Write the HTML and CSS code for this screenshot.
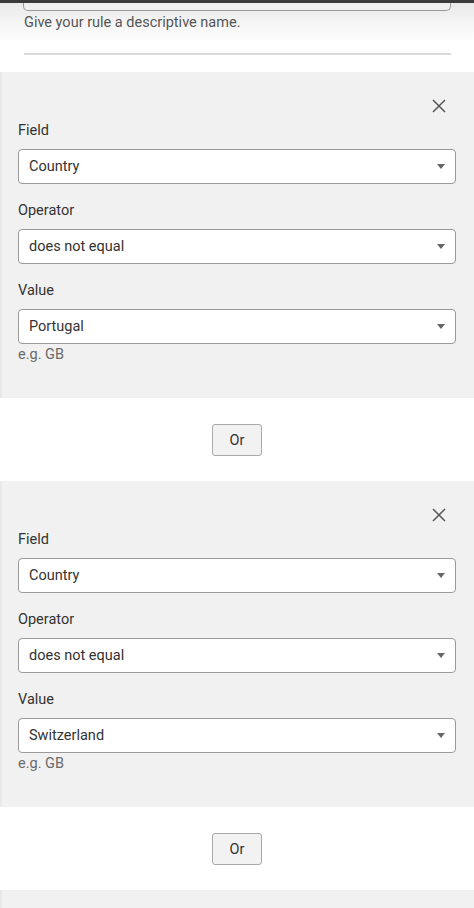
FILE: index.html
```html
<!DOCTYPE html>
<html lang="en">
<head>
<meta charset="utf-8">
<meta name="viewport" content="width=474">
<title>Rule</title>
<link rel="stylesheet" href="styles.css">
</head>
<body>
<div class="topbar"></div>
<section class="name-section">
  <div class="name-input"></div>
  <p class="hint">Give your rule a descriptive name.</p>
  <div class="divider"></div>
</section>

<div class="rule">
  <div class="close-row">
    <svg class="close" width="14" height="14" viewBox="0 0 14 14"><path d="M1 1 L13 13 M13 1 L1 13" stroke="#555" stroke-width="1.5" fill="none"/></svg>
  </div>
  <div class="label">Field</div>
  <div class="select"><span>Country</span><i class="caret"></i></div>
  <div class="label">Operator</div>
  <div class="select"><span>does not equal</span><i class="caret"></i></div>
  <div class="label">Value</div>
  <div class="select"><span>Portugal</span><i class="caret"></i></div>
  <div class="help">e.g. GB</div>
</div>
<div class="or-row"><button class="or">Or</button></div>

<div class="rule">
  <div class="close-row">
    <svg class="close" width="14" height="14" viewBox="0 0 14 14"><path d="M1 1 L13 13 M13 1 L1 13" stroke="#555" stroke-width="1.5" fill="none"/></svg>
  </div>
  <div class="label">Field</div>
  <div class="select"><span>Country</span><i class="caret"></i></div>
  <div class="label">Operator</div>
  <div class="select"><span>does not equal</span><i class="caret"></i></div>
  <div class="label">Value</div>
  <div class="select"><span>Switzerland</span><i class="caret"></i></div>
  <div class="help">e.g. GB</div>
</div>
<div class="or-row"><button class="or">Or</button></div>

<div class="rule"></div>
</body>
</html>
```

FILE: styles.css
```css
html, body {
  margin: 0;
  padding: 0;
  background: #fff;
  font-family: Roboto, "Noto Sans", sans-serif;
  color: #333;
}
.topbar {
  height: 3px;
  background: #3a3a3a;
}
.name-section {
  background: linear-gradient(#e9e9e9 0px, #f6f6f6 22px, #ffffff 40px);
  padding: 0 0 17px;
}
.name-input {
  height: 7px;
  margin: 0 23px 0 23px;
  border: 1px solid #9a9a9a;
  border-top: none;
  border-radius: 0 0 5px 5px;
  background: #efefef;
}
.hint {
  margin: 3px 0 0 24px;
  font-size: 14.5px;
  line-height: 18px;
  color: #555;
}
.divider {
  margin: 21px 23px 0 24px;
  height: 2px;
  background: #dadada;
}
.rule {
  background: #f1f1f1;
  border-left: 2px solid #e9e9e9;
  padding: 26px 18px 34px 16px;
}
.rule:last-child {
  padding: 0;
  height: 40px;
}
.close-row {
  display: flex;
  justify-content: flex-end;
  height: 16px;
  align-items: center;
  padding-right: 10px;
}
.close {
  display: block;
}
.label {
  font-size: 14.5px;
  line-height: 20px;
  color: #333;
  margin-top: 7px;
  margin-bottom: 8px;
}
.select + .label {
  margin-top: 17px;
}
.select {
  height: 33px;
  background: #fff;
  border: 1px solid #9a9a9a;
  border-radius: 4px;
  display: flex;
  align-items: center;
  justify-content: space-between;
  padding: 0 10px 0 10px;
  font-size: 14.5px;
  color: #333;
}
.caret {
  width: 0;
  height: 0;
  border-left: 4.5px solid transparent;
  border-right: 4.5px solid transparent;
  border-top: 5px solid #666;
}
.help {
  margin-top: 2px;
  font-size: 14.5px;
  line-height: 18px;
  color: #6a6a6a;
}
.or-row {
  height: 83px;
  display: flex;
  justify-content: center;
  align-items: flex-start;
}
.or {
  margin-top: 26px;
  width: 50px;
  height: 32px;
  background: #f2f2f2;
  border: 1px solid #a8a8a8;
  border-radius: 3px;
  font-family: Roboto, "Noto Sans", sans-serif;
  font-size: 14.5px;
  color: #333;
  padding: 0;
}
```
